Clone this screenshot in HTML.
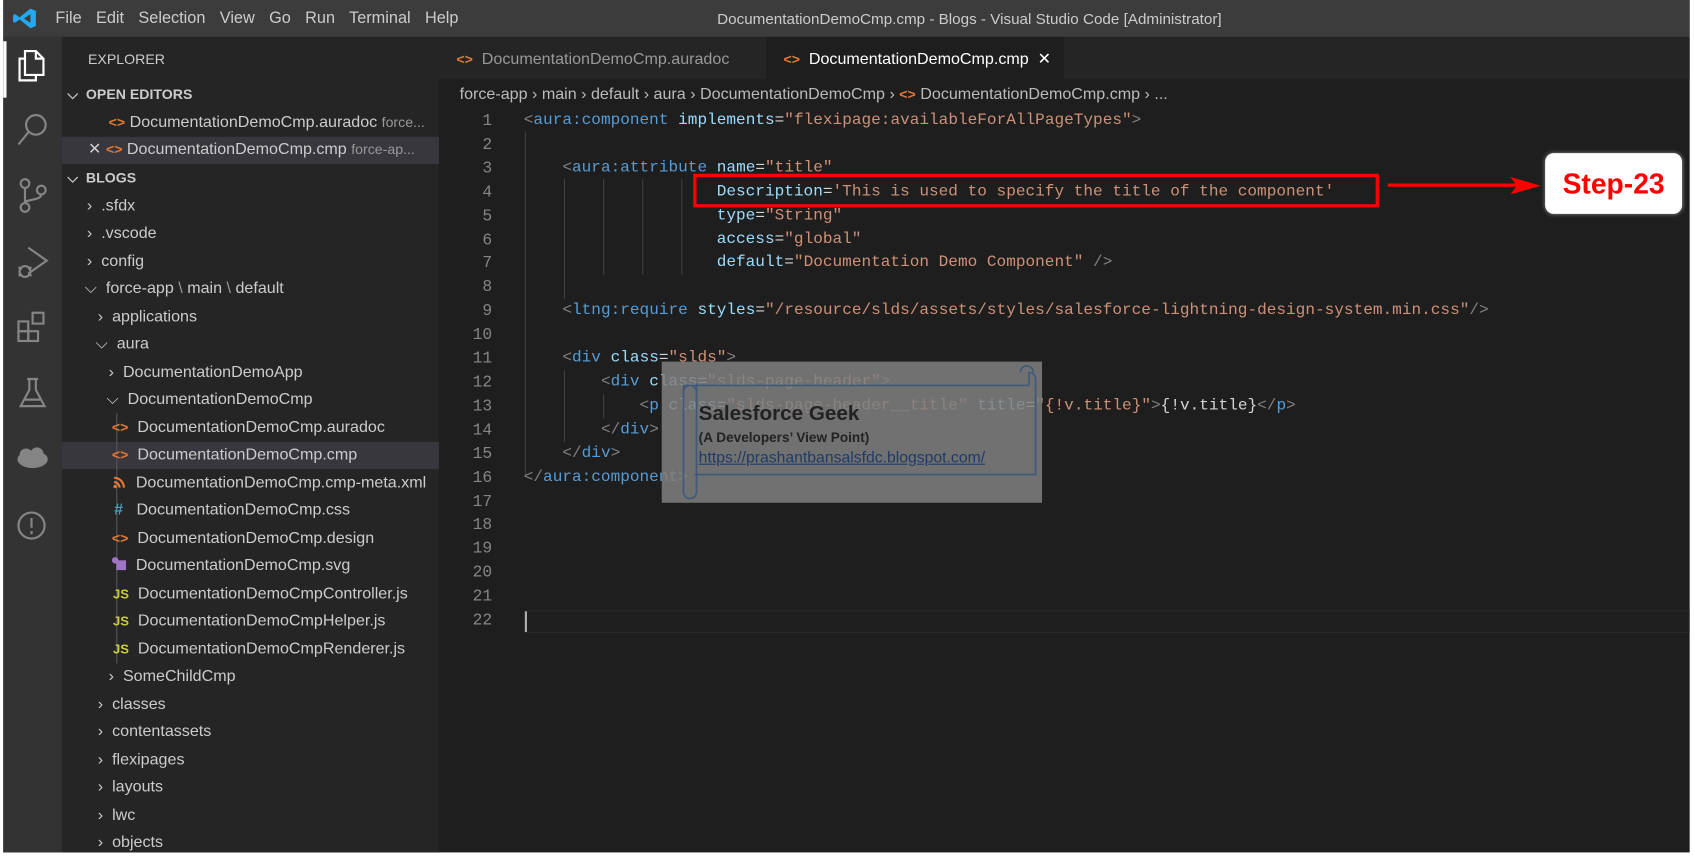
<!DOCTYPE html>
<html><head><meta charset="utf-8"><style>
*{margin:0;padding:0;box-sizing:border-box}
html,body{width:1695px;height:860px;overflow:hidden;background:#fff}
#w{position:absolute;left:0;top:0;width:1560px;height:792px;transform:scale(1.0866,1.0859);transform-origin:0 0;font-family:"Liberation Sans",sans-serif;overflow:hidden}
.a{position:absolute;white-space:nowrap}
.t{color:#ccc;font-size:14.8px;line-height:18px}
.c{font-family:"Liberation Mono",monospace;font-size:14.8px;line-height:18px;color:#9cdcfe;white-space:pre}
.tg{color:#569cd6}.at{color:#9cdcfe}.s{color:#ce9178}.p{color:#808080}.w{color:#d4d4d4}
.ln{font-family:"Liberation Mono",monospace;font-size:15px;color:#858585;width:40px;text-align:right}
.ic{color:#e37933;font-weight:bold;font-size:13px}
</style></head><body><div id="w">
<div class="a" style="left:3px;top:0;width:1552px;height:785px;background:#1e1e1e"></div>
<div class="a" style="left:3px;top:0;width:1552px;height:34px;background:#3c3c3c"></div>
<div class="a" style="left:3px;top:34px;width:54px;height:751px;background:#333"></div>
<div class="a" style="left:57px;top:34px;width:347px;height:751px;background:#252526"></div>
<div class="a" style="left:404px;top:34px;width:1151px;height:39px;background:#252526"></div>
<div class="a" style="left:705px;top:34px;width:274px;height:39px;background:#1e1e1e"></div>
<!-- title -->
<svg class="a" style="left:12px;top:7px" width="22" height="20" viewBox="0 0 22 20"><path d="M16 1 L21 3 V17 L16 19 L6 11 L2 14 L0 13 V7 L2 6 L6 9 Z M16 6 L10 10 L16 14Z" fill="#23a9f2"/></svg>
<div class="a t" style="left:51px;top:8px;font-size:15px;color:#ccc;word-spacing:9px">File Edit Selection View Go Run Terminal Help</div>
<div class="a t" style="left:660px;top:8px;font-size:14px">DocumentationDemoCmp.cmp - Blogs - Visual Studio Code [Administrator]</div>
<!-- activity -->
<div class="a" style="left:3px;top:38px;width:3px;height:52px;background:#fff"></div>
<svg class="a" style="left:14px;top:44px" width="30" height="34" fill="none" stroke="#fff" stroke-width="2"><path d="M9 3h10l7 7v15H9z M19 3v7h7 M9 10H4v20h15v-5"/></svg>
<svg class="a" style="left:14px;top:103px" width="32" height="34" fill="none" stroke="#858585" stroke-width="2"><circle cx="19" cy="12" r="9"/><path d="M12 19L3 30"/></svg>
<svg class="a" style="left:14px;top:163px" width="32" height="36" fill="none" stroke="#858585" stroke-width="2"><circle cx="9" cy="6" r="4"/><circle cx="9" cy="28" r="4"/><circle cx="24" cy="12" r="4"/><path d="M9 10v14 M24 16c0 6-15 4-15 8"/></svg>
<svg class="a" style="left:14px;top:224px" width="32" height="36" fill="none" stroke="#858585" stroke-width="2"><path d="M12 4l17 12-17 12"/><circle cx="9" cy="26" r="5"/><path d="M3 22l3 2M3 30l3-2M15 22l-3 2M15 30l-3-2"/></svg>
<svg class="a" style="left:14px;top:285px" width="32" height="34" fill="none" stroke="#858585" stroke-width="2"><rect x="3" y="11" width="9" height="9"/><rect x="3" y="20" width="9" height="9"/><rect x="12" y="20" width="9" height="9"/><rect x="16" y="3" width="10" height="10"/></svg>
<svg class="a" style="left:14px;top:346px" width="32" height="34" fill="none" stroke="#858585" stroke-width="2"><path d="M11 3h10M13 3v10L5 28h22L19 13V3M8 22h16"/></svg>
<svg class="a" style="left:14px;top:410px" width="32" height="26"><ellipse cx="16" cy="13" rx="14" ry="8" fill="#858585"/><circle cx="10" cy="9" r="6" fill="#858585"/><circle cx="20" cy="8" r="6" fill="#858585"/></svg>
<svg class="a" style="left:15px;top:470px" width="30" height="30" fill="none" stroke="#858585" stroke-width="2"><circle cx="14" cy="14" r="12"/><path d="M14 7v9M14 19v3"/></svg>
<!-- sidebar -->
<div class="a t" style="left:81px;top:46px;font-size:13px">EXPLORER</div>
<div class="a" style="left:57px;top:126px;width:347px;height:25px;background:#37373d"></div>
<div class="a" style="left:57px;top:407px;width:347px;height:25px;background:#37373d"></div>
<div class="a t" style="left:62px;top:78px;font-size:13px;font-weight:bold">⌵&nbsp; OPEN EDITORS</div>
<div class="a t" style="left:62px;top:155px;font-size:13px;font-weight:bold">⌵&nbsp; BLOGS</div>
<div class="a t" style="left:100px;top:104px"><span class="ic">&lt;&gt;</span> DocumentationDemoCmp.auradoc <span style="font-size:13px;color:#999">force...</span></div>
<div class="a t" style="left:81px;top:129px">✕ <span class="ic">&lt;&gt;</span> DocumentationDemoCmp.cmp <span style="font-size:13px;color:#999">force-ap...</span></div>
<div class="a t" style="left:80px;top:181px">›&nbsp; .sfdx</div>
<div class="a t" style="left:80px;top:206px">›&nbsp; .vscode</div>
<div class="a t" style="left:80px;top:232px">›&nbsp; config</div>
<div class="a t" style="left:78px;top:257px">⌵&nbsp; force-app <span style="color:#999">\</span> main <span style="color:#999">\</span> default</div>
<div class="a t" style="left:90px;top:283px">›&nbsp; applications</div>
<div class="a t" style="left:88px;top:308px">⌵&nbsp; aura</div>
<div class="a t" style="left:100px;top:334px">›&nbsp; DocumentationDemoApp</div>
<div class="a t" style="left:98px;top:359px">⌵&nbsp; DocumentationDemoCmp</div>
<div class="a" style="left:107px;top:381px;width:1px;height:230px;background:#585858"></div>
<div class="a t" style="left:103px;top:385px"><span class="ic">&lt;&gt;</span>&nbsp; DocumentationDemoCmp.auradoc</div>
<div class="a t" style="left:103px;top:410px"><span class="ic">&lt;&gt;</span>&nbsp; DocumentationDemoCmp.cmp</div>
<svg class="a" style="left:104px;top:438px" width="12" height="12"><path d="M1 2a9 9 0 0 1 9 9M1 6a5 5 0 0 1 5 5" stroke="#e37933" stroke-width="2" fill="none"/><circle cx="2" cy="10" r="1.6" fill="#e37933"/></svg>
<div class="a t" style="left:125px;top:436px">DocumentationDemoCmp.cmp-meta.xml</div>
<div class="a t" style="left:105px;top:461px"><span style="color:#519aba;font-weight:bold">#</span>&nbsp;&nbsp; DocumentationDemoCmp.css</div>
<div class="a t" style="left:103px;top:487px"><span class="ic">&lt;&gt;</span>&nbsp; DocumentationDemoCmp.design</div>
<div class="a" style="left:103px;top:513px;width:6px;height:6px;border-radius:3px;background:#a074c4"></div>
<div class="a" style="left:107px;top:516px;width:9px;height:9px;background:#a074c4"></div>
<div class="a t" style="left:125px;top:512px">DocumentationDemoCmp.svg</div>
<div class="a t" style="left:104px;top:538px"><span style="color:#cbcb41;font-weight:bold;font-size:12px">JS</span>&nbsp; DocumentationDemoCmpController.js</div>
<div class="a t" style="left:104px;top:563px"><span style="color:#cbcb41;font-weight:bold;font-size:12px">JS</span>&nbsp; DocumentationDemoCmpHelper.js</div>
<div class="a t" style="left:104px;top:589px"><span style="color:#cbcb41;font-weight:bold;font-size:12px">JS</span>&nbsp; DocumentationDemoCmpRenderer.js</div>
<div class="a t" style="left:100px;top:614px">›&nbsp; SomeChildCmp</div>
<div class="a t" style="left:90px;top:640px">›&nbsp; classes</div>
<div class="a t" style="left:90px;top:665px">›&nbsp; contentassets</div>
<div class="a t" style="left:90px;top:691px">›&nbsp; flexipages</div>
<div class="a t" style="left:90px;top:716px">›&nbsp; layouts</div>
<div class="a t" style="left:90px;top:742px">›&nbsp; lwc</div>
<div class="a t" style="left:90px;top:767px">›&nbsp; objects</div>
<!-- tabs -->
<div class="a t" style="left:420px;top:46px;color:#999"><span class="ic">&lt;&gt;</span>&nbsp; DocumentationDemoCmp.auradoc</div>
<div class="a t" style="left:721px;top:46px;color:#fff"><span class="ic">&lt;&gt;</span>&nbsp; DocumentationDemoCmp.cmp&nbsp; ✕</div>
<div class="a t" style="left:423px;top:78px;color:#bbb">force-app › main › default › aura › DocumentationDemoCmp › <span class="ic">&lt;&gt;</span> DocumentationDemoCmp.cmp › ...</div>
<!-- line numbers -->
<div class="a ln" style="left:413px;top:101px;line-height:21.9px;white-space:pre">1
2
3
4
5
6
7
8
9
10
11
12
13
14
15
16
17
18
19
20
21
22</div>
<div class="a" style="left:483px;top:121px;width:1px;height:318px;background:#404040"></div>
<div class="a" style="left:519px;top:165px;width:1px;height:110px;background:#404040"></div>
<div class="a" style="left:555px;top:165px;width:1px;height:88px;background:#404040"></div>
<div class="a" style="left:591px;top:165px;width:1px;height:88px;background:#404040"></div>
<div class="a" style="left:627px;top:165px;width:1px;height:88px;background:#404040"></div>
<div class="a" style="left:519px;top:341px;width:1px;height:66px;background:#404040"></div>
<div class="a" style="left:555px;top:363px;width:1px;height:22px;background:#404040"></div>
<div class="a" style="left:483px;top:562px;width:1072px;height:21px;border:1px solid #282828"></div>
<div class="a" style="left:483px;top:563px;width:2px;height:19px;background:#aeafad"></div>
<div class="a c" style="left:482px;top:101px;line-height:21.9px"><span class="p">&lt;</span><span class="tg">aura:component</span> <span class="at">implements</span><span class="w">=</span><span class="s">"flexipage:availableForAllPageTypes"</span><span class="p">&gt;</span>

    <span class="p">&lt;</span><span class="tg">aura:attribute</span> <span class="at">name</span><span class="w">=</span><span class="s">"title"</span>
                    <span class="at">Description</span><span class="w">=</span><span class="s">'This is used to specify the title of the component'</span>
                    <span class="at">type</span><span class="w">=</span><span class="s">"String"</span>
                    <span class="at">access</span><span class="w">=</span><span class="s">"global"</span>
                    <span class="at">default</span><span class="w">=</span><span class="s">"Documentation Demo Component"</span> <span class="p">/&gt;</span>

    <span class="p">&lt;</span><span class="tg">ltng:require</span> <span class="at">styles</span><span class="w">=</span><span class="s">"/resource/slds/assets/styles/salesforce-lightning-design-system.min.css"</span><span class="p">/&gt;</span>

    <span class="p">&lt;</span><span class="tg">div</span> <span class="at">class</span><span class="w">=</span><span class="s">"slds"</span><span class="p">&gt;</span>
        <span class="p">&lt;</span><span class="tg">div</span> <span class="at">class</span><span class="w">=</span><span class="s">"slds-page-header"</span><span class="p">&gt;</span>
            <span class="p">&lt;</span><span class="tg">p</span> <span class="at">class</span><span class="w">=</span><span class="s">"slds-page-header__title"</span> <span class="at">title</span><span class="w">=</span><span class="s">"{!v.title}"</span><span class="p">&gt;</span><span class="w">{!v.title}</span><span class="p">&lt;/</span><span class="tg">p</span><span class="p">&gt;</span>
        <span class="p">&lt;/</span><span class="tg">div</span><span class="p">&gt;</span>
    <span class="p">&lt;/</span><span class="tg">div</span><span class="p">&gt;</span>
<span class="p">&lt;/</span><span class="tg">aura:component</span><span class="p">&gt;</span></div>
<!-- watermark -->
<div class="a" style="left:609px;top:333px;width:350px;height:130px;background:rgba(128,128,128,0.85)"></div>
<svg class="a" style="left:609px;top:333px" width="350" height="130" fill="none" stroke="#3d5a7a" stroke-width="1.5"><path d="M20 22 H338 M20 22 V120 a6 6 0 0 0 12 0 V20 M20 28 a6 6 0 0 1 12 0 M338 22 V10 a6 6 0 0 1 6 6 V104 H30 M330 10 a6 6 0 0 1 12 0"/></svg>
<div class="a" style="left:643px;top:371px;font-weight:bold;font-size:19px;color:#222">Salesforce Geek</div>
<div class="a" style="left:643px;top:396px;font-weight:bold;font-size:12.5px;color:#222">(A Developers’ View Point)</div>
<div class="a" style="left:643px;top:414px;font-size:14.5px;color:#1f3a66;text-decoration:underline">https://prashantbansalsfdc.blogspot.com/</div>
<!-- annotation -->
<div class="a" style="left:638px;top:160px;width:631px;height:31px;border:3px solid #f00"></div>
<div class="a" style="left:1277px;top:169px;width:122px;height:3px;background:#f00"></div>
<svg class="a" style="left:1390px;top:163px" width="28" height="16"><path d="M0 0L28 8L0 16L6 8Z" fill="#f00"/></svg>
<div class="a" style="left:1422px;top:141px;width:126px;height:56px;background:#fff;border-radius:8px;box-shadow:0 0 4px #888;color:#f00;font-weight:bold;font-size:26px;text-align:center;line-height:56px">Step-23</div>
</div></body></html>
